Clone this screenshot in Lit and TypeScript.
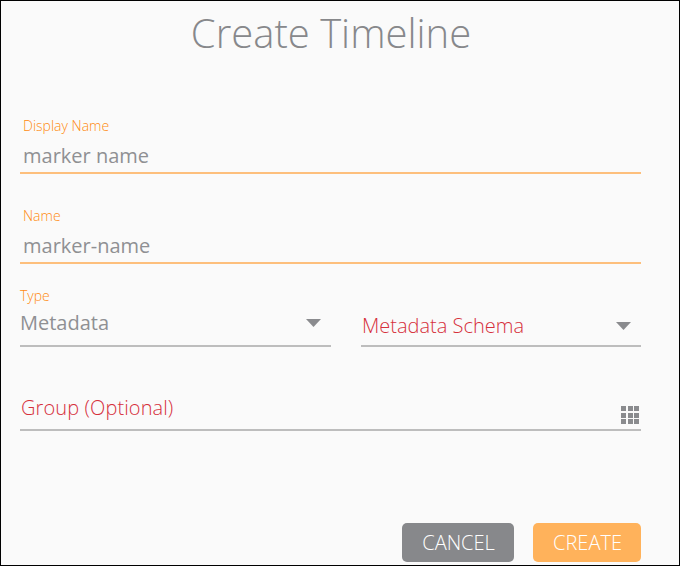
import { LitElement, html, css, svg } from "lit";
import { customElement } from "lit/decorators.js";

const caret = svg`<svg class="caret" width="15" height="8" viewBox="0 0 15 8"><path d="M0 0H15L7.5 8Z" fill="#8a8b8e"/></svg>`;

@customElement("app-root")
export class AppRoot extends LitElement {
  static styles = css`
    :host {
      display: block;
      width: 680px;
      height: 566px;
      box-sizing: border-box;
      border: 1px solid #000;
      background: #fafafa;
      font-family: "Open Sans", sans-serif;
      overflow: hidden;
    }
    .dialog {
      height: 100%;
      box-sizing: border-box;
      padding: 0 38px 3px 19px;
      display: flex;
      flex-direction: column;
    }
    h1 {
      margin: 6px 0 0;
      height: 52px;
      line-height: 52px;
      font-size: 40px;
      font-weight: 300;
      color: #87888b;
      text-align: center;
      padding-left: 1px;
    }
    .field {
      display: flex;
      flex-direction: column;
      border-bottom: 2px solid #bdbdbd;
      box-sizing: border-box;
    }
    .active {
      border-bottom-color: #fdbf7c;
    }
    .text-field {
      height: 58px;
      padding-left: 3px;
    }
    .first { margin-top: 57px; }
    .second { margin-top: 32px; }
    .label {
      font-size: 14px;
      font-weight: 300;
      line-height: 19px;
      color: #ff8a10;
    }
    .value {
      font-size: 20px;
      line-height: 27px;
      margin-top: 7px;
      color: #8f9093;
    }
    .row {
      display: grid;
      grid-template-columns: 311px 280px;
      gap: 30px;
      margin-top: 25px;
      align-items: end;
    }
    .select {
      height: 58px;
      justify-content: flex-start;
    }
    .select .label { margin-top: -3px; }
    .select .value {
      margin-top: 4px;
      line-height: 27px;
    }
    .select .caret { margin-top: 4px; }
    .line {
      display: flex;
      align-items: center;
      justify-content: space-between;
      padding-right: 10px;
    }
    .schema {
      height: 58px;
      justify-content: flex-end;
      padding-bottom: 6px;
      padding-left: 1px;
    }
    .err {
      font-size: 20px;
      font-weight: 300;
      color: #d6303c;
      line-height: 27px;
    }
    .group {
      margin-top: 43px;
      height: 41px;
      padding: 0 0 0 1px;
      flex-direction: row;
      justify-content: space-between;
      align-items: flex-start;
    }
    .group .err { margin-top: 4px; letter-spacing: 0.1px; }
    .grid {
      margin-top: 16px;
      margin-right: 2px;
      display: grid;
      grid-template-columns: repeat(3, 5px);
      grid-auto-rows: 5px;
      gap: 1.5px;
    }
    .grid i { background: #8a8b8e; display: block; }
    .actions {
      margin-top: auto;
      display: flex;
      justify-content: flex-end;
      gap: 19px;
    }
    .btn {
      height: 39px;
      border: 0;
      border-radius: 5px;
      font-family: inherit;
      font-size: 20px;
      font-weight: 300;
      color: #fff;
      padding: 0 0 0 1px;
    }
    .cancel { width: 112px; background: #87888b; }
    .create { width: 108px; background: #ffb25b; }
  `;

  render() {
    return html`<div class="dialog">
      <h1>Create Timeline</h1>
      <div class="field text-field active first">
        <span class="label">Display Name</span>
        <span class="value">marker name</span>
      </div>
      <div class="field text-field active second">
        <span class="label">Name</span>
        <span class="value">marker-name</span>
      </div>
      <div class="row">
        <div class="field select">
          <span class="label">Type</span>
          <div class="line"><span class="value">Metadata</span>${caret}</div>
        </div>
        <div class="field schema">
          <div class="line"><span class="err">Metadata Schema</span>${caret}</div>
        </div>
      </div>
      <div class="field group">
        <span class="err">Group (Optional)</span>
        <div class="grid">${Array.from({ length: 9 }, () => html`<i></i>`)}</div>
      </div>
      <div class="actions">
        <button class="btn cancel">CANCEL</button>
        <button class="btn create">CREATE</button>
      </div>
    </div>`;
  }
}
